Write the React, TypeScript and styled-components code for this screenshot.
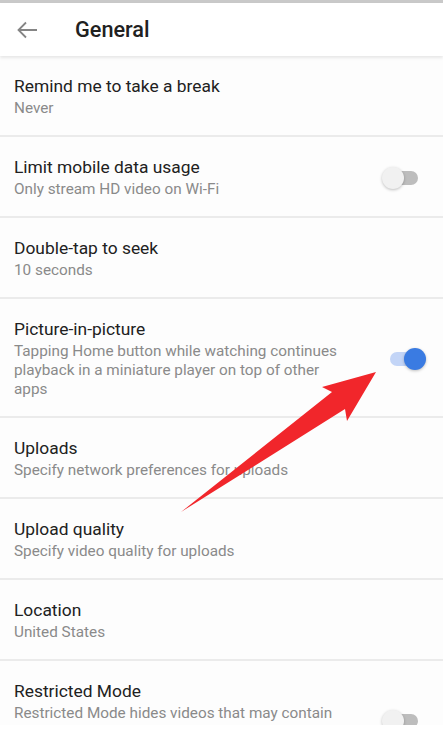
import styled, { createGlobalStyle } from 'styled-components'

const GlobalStyle = createGlobalStyle`
  html, body {
    margin: 0;
    padding: 0;
    background: #ffffff;
  }
  body {
    font-family: Roboto, "Noto Sans", Arial, sans-serif;
    -webkit-font-smoothing: antialiased;
  }
`

type Setting = {
  title: string
  subtitle: string
  toggle?: 'on' | 'off'
}

const settings: Setting[] = [
  { title: 'Remind me to take a break', subtitle: 'Never' },
  { title: 'Limit mobile data usage', subtitle: 'Only stream HD video on Wi-Fi', toggle: 'off' },
  { title: 'Double-tap to seek', subtitle: '10 seconds' },
  {
    title: 'Picture-in-picture',
    subtitle: 'Tapping Home button while watching continues playback in a miniature player on top of other apps',
    toggle: 'on',
  },
  { title: 'Uploads', subtitle: 'Specify network preferences for uploads' },
  { title: 'Upload quality', subtitle: 'Specify video quality for uploads' },
  { title: 'Location', subtitle: 'United States' },
  {
    title: 'Restricted Mode',
    subtitle:
      'Restricted Mode hides videos that may contain inappropriate content flagged by users and other signals. No filter is 100% accurate.',
    toggle: 'off',
  },
]

export default function App() {
  return (
    <>
      <GlobalStyle />
      <Screen>
        <StatusEdge />
        <Header>
          <BackButton aria-label="Back">
            <svg width="22" height="18" viewBox="0 0 22 18">
              <path d="M21 9H2.5M10 1.5L2.5 9l7.5 7.5" fill="none" stroke="#858585" strokeWidth="1.8" />
            </svg>
          </BackButton>
          <Title>General</Title>
        </Header>
        <List>
          {settings.map((s) => (
            <Row key={s.title}>
              <Texts>
                <RowTitle>{s.title}</RowTitle>
                <RowSubtitle>{s.subtitle}</RowSubtitle>
              </Texts>
              {s.toggle && (
                <Toggle>
                  <Track $on={s.toggle === 'on'} />
                  <Thumb $on={s.toggle === 'on'} />
                </Toggle>
              )}
            </Row>
          ))}
        </List>
        <BottomEdge />
        <Pointer viewBox="0 0 443 732" aria-hidden="true">
          <polygon
            points="181,512 332,392 322,387 376,372 347,421 345,409"
            fill="#f1262b"
          />
        </Pointer>
      </Screen>
    </>
  )
}

const Screen = styled.div`
  position: relative;
  width: 443px;
  height: 732px;
  display: flex;
  flex-direction: column;
  overflow: hidden;
  background: #ffffff;
`

const StatusEdge = styled.div`
  flex-shrink: 0;
  height: 3px;
  background: #c9c9c9;
`

const Header = styled.header`
  position: relative;
  z-index: 1;
  flex-shrink: 0;
  height: 53px;
  display: flex;
  align-items: center;
  background: #ffffff;
  box-shadow: 0 2px 3px rgba(0, 0, 0, 0.09);
`

const BackButton = styled.div`
  width: 75px;
  display: flex;
  align-items: center;
  padding-left: 16px;
  box-sizing: border-box;
  svg {
    display: block;
  }
`

const Title = styled.h1`
  margin: 0;
  font-size: 21.7px;
  font-weight: 500;
  color: #212121;
`

const List = styled.div`
  flex: 1;
  min-height: 0;
  overflow: hidden;
  display: flex;
  flex-direction: column;
  background: #fdfdfd;
`

const BottomEdge = styled.div`
  flex-shrink: 0;
  height: 7px;
  background: #ffffff;
`

const Row = styled.div`
  flex-shrink: 0;
  display: flex;
  align-items: center;
  padding: 19px 17px 17px 14px;
  border-bottom: 2px solid #ebebeb;
`

const Texts = styled.div`
  flex: 0 0 338px;
  display: flex;
  flex-direction: column;
  gap: 2px;
`

const RowTitle = styled.div`
  font-size: 17.4px;
  line-height: 22px;
  color: #212121;
`

const RowSubtitle = styled.div`
  font-size: 15.3px;
  line-height: 19px;
  color: #8a8a8a;
`

const Toggle = styled.div`
  position: relative;
  margin-left: auto;
  width: 44px;
  height: 22px;
  flex-shrink: 0;
`

const Track = styled.div<{ $on: boolean }>`
  position: absolute;
  left: 8px;
  right: 8px;
  top: 4px;
  height: 14px;
  border-radius: 7px;
  background: ${({ $on }) => ($on ? '#c3d5f7' : '#bdbdbd')};
`

const Thumb = styled.div<{ $on: boolean }>`
  position: absolute;
  top: 0;
  left: ${({ $on }) => ($on ? '22px' : '0')};
  width: 22px;
  height: 22px;
  border-radius: 50%;
  background: ${({ $on }) => ($on ? '#3a7be2' : '#f1f1f1')};
  box-shadow: 0 1px 3px rgba(0, 0, 0, 0.25);
`

const Pointer = styled.svg`
  position: absolute;
  inset: 0;
  width: 443px;
  height: 732px;
  pointer-events: none;
  z-index: 2;
`
